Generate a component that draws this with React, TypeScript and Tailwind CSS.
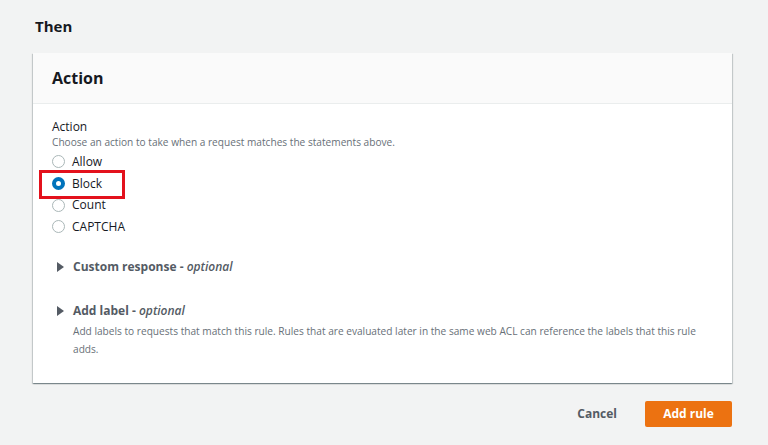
import React, { useState } from 'react'

const font = { fontFamily: '"Open Sans", "Liberation Sans", sans-serif' }

function Radio({ label, checked, onSelect }: { label: string; checked: boolean; onSelect: () => void }) {
  return (
    <label className="flex items-center h-[21.7px] cursor-pointer" onClick={onSelect}>
      {checked ? (
        <span className="w-[13px] h-[13px] rounded-full border-[4px] border-[#0073bb] bg-white" />
      ) : (
        <span className="w-[13px] h-[13px] rounded-full border border-[#aab7b8] bg-white" />
      )}
      <span className="ml-[7px] text-[12px] text-[#16191f]">{label}</span>
    </label>
  )
}

function Expander({ title }: { title: string }) {
  return (
    <div className="flex items-center text-[12px] font-bold text-[#545b64]">
      <svg width="7" height="10" viewBox="0 0 7 10" className="ml-[5px] mr-[9px]">
        <path d="M0 0 L7 5 L0 10 Z" fill="#545b64" />
      </svg>
      <span>
        {title} - <span className="italic font-semibold">optional</span>
      </span>
    </div>
  )
}

export default function App() {
  const [action, setAction] = useState('Block')
  const options = ['Allow', 'Block', 'Count', 'CAPTCHA']

  return (
    <div className="w-[768px] h-[445px] bg-[#f2f3f3] overflow-hidden" style={font}>
      <div className="pl-[35px] pt-[16px] h-[53px]">
        <h2 className="text-[15px] font-bold text-[#16191f] leading-[20px]">Then</h2>
      </div>

      {/* Panel */}
      <div className="ml-[33px] w-[699px] h-[330px] bg-white shadow-[0_1px_1px_0_rgba(0,28,36,0.3),1px_1px_1px_0_rgba(0,28,36,0.15),-1px_1px_1px_0_rgba(0,28,36,0.15)]">
        <div className="h-[51px] bg-[#fafafa] border-b border-[#eaeded] flex items-center px-[19px]">
          <h3 className="text-[16px] font-bold text-[#16191f]">Action</h3>
        </div>

        <div className="px-[19px] pt-[15px]">
          <div className="text-[12px] text-[#16191f] leading-[16px]">Action</div>
          <div className="text-[10.15px] text-[#687078] leading-[14px]">
            Choose an action to take when a request matches the statements above.
          </div>

          <div className="mt-[2px] flex flex-col">
            {options.map((o) => (
              <div key={o} className="relative">
                <Radio label={o} checked={action === o} onSelect={() => setAction(o)} />
                {o === 'Block' && (
                  <div className="absolute left-[-13px] top-[-3px] w-[86px] h-[29px] border-[3px] border-[#e3111c] pointer-events-none" />
                )}
              </div>
            ))}
          </div>

          <div className="mt-[20px]">
            <Expander title="Custom response" />
          </div>

          <div className="mt-[26px]">
            <Expander title="Add label" />
            <p className="ml-[21px] mt-[2px] text-[10.15px] leading-[18px] text-[#687078]">
              Add labels to requests that match this rule. Rules that are evaluated later in the same web ACL can
              reference the labels that this rule adds.
            </p>
          </div>
        </div>
      </div>

      <div className="w-[732px] flex justify-end items-center mt-[18px] gap-[28px]">
        <button className="text-[12px] font-bold text-[#545b64]">Cancel</button>
        <button className="w-[87px] h-[26px] bg-[#ec7211] rounded-[2px] text-[12px] font-bold text-white">
          Add rule
        </button>
      </div>
    </div>
  )
}
